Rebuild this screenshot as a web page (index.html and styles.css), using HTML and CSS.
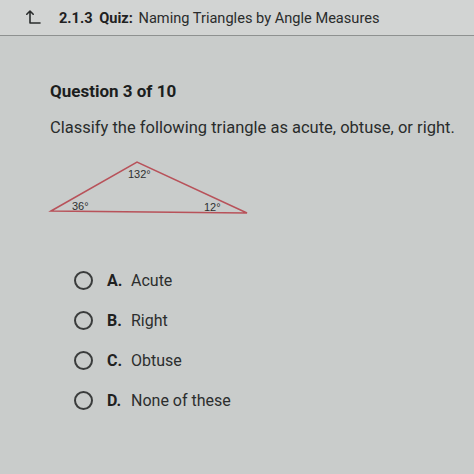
FILE: index.html
```html
<!DOCTYPE html>
<html>
<head>
<meta charset="utf-8">
<link rel="stylesheet" href="styles.css">
</head>
<body>
<header class="topbar">
  <svg class="back-icon" width="16" height="16" viewBox="0 0 16 16" aria-hidden="true">
    <path d="M4 14 V2 M0.8 5.2 L4 2 L7.2 5.2 M4 14 H14" fill="none" stroke="#2a2c2c" stroke-width="1.6" stroke-linecap="round" stroke-linejoin="round"/>
  </svg>
  <span class="crumb"><b>2.1.3</b> <b class="quiz">Quiz:</b> Naming Triangles by Angle Measures</span>
</header>
<main class="content">
  <h1 class="qnum">Question 3 of 10</h1>
  <p class="prompt">Classify the following triangle as acute, obtuse, or right.</p>
  <svg class="triangle" width="210" height="66" viewBox="0 0 210 66">
    <polygon points="6,56 92,7 202,58" fill="none" stroke="#b8525a" stroke-width="1.5" stroke-linejoin="miter"/>
    <text x="83" y="23" class="angle">132°</text>
    <text x="27" y="55" class="angle">36°</text>
    <text x="159" y="56" class="angle">12°</text>
  </svg>
  <ul class="options">
    <li class="option"><span class="radio"></span><span class="letter">A.</span><span class="label">Acute</span></li>
    <li class="option"><span class="radio"></span><span class="letter">B.</span><span class="label">Right</span></li>
    <li class="option"><span class="radio"></span><span class="letter">C.</span><span class="label">Obtuse</span></li>
    <li class="option"><span class="radio"></span><span class="letter">D.</span><span class="label">None of these</span></li>
  </ul>
</main>
</body>
</html>
```
FILE: styles.css
```css
html, body {
  margin: 0;
  padding: 0;
}
body {
  width: 474px;
  height: 474px;
  overflow: hidden;
  background: #c9cccb;
  font-family: Roboto, "Liberation Sans", Arial, sans-serif;
  color: #262828;
}
.topbar {
  height: 36px;
  background: #d2d4d3;
  border-bottom: 1.5px solid #8e9190;
  display: flex;
  align-items: center;
  padding-left: 26px;
  gap: 17px;
  box-sizing: border-box;
}
.back-icon {
  flex: none;
  margin-top: -2px;
}
.crumb {
  font-size: 14.6px;
  color: #2a2c2c;
  white-space: nowrap;
}
.crumb b {
  font-weight: 700;
  color: #1f2121;
}
.quiz {
  margin-left: 3px;
  margin-right: 2px;
}
.content {
  padding: 45px 0 0 50px;
}
.qnum {
  margin: 0;
  font-size: 17px;
  line-height: 20px;
  font-weight: 700;
  color: #1c1e1e;
}
.prompt {
  margin: 17px 0 0 0;
  font-size: 16.5px;
  line-height: 20px;
  color: #2a2c2c;
}
.triangle {
  display: block;
  margin: 17px 0 0 -5px;
}
.angle {
  font-family: "Liberation Sans", Arial, sans-serif;
  font-size: 11px;
  fill: #2e3030;
}
.options {
  list-style: none;
  margin: 49px 0 0 24px;
  padding: 0;
  display: flex;
  flex-direction: column;
  gap: 20.3px;
}
.option {
  display: flex;
  align-items: center;
  height: 20px;
  font-size: 16px;
}
.radio {
  width: 15px;
  height: 15px;
  border: 2px solid #3a3c3c;
  border-radius: 50%;
  flex: none;
  margin-right: 14px;
}
.letter {
  font-weight: 700;
  width: 24px;
  color: #1f2121;
}
.label {
  color: #2c2e2e;
}
```
